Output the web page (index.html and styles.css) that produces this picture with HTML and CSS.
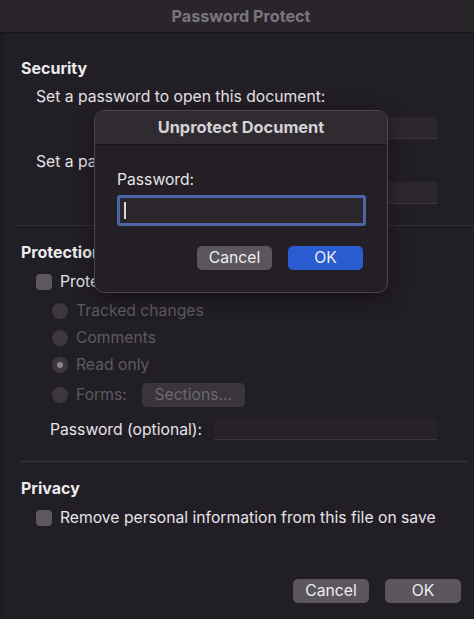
FILE: index.html
```html
<!DOCTYPE html>
<html>
<head>
<meta charset="utf-8">
<link rel="stylesheet" href="styles.css">
</head>
<body>
<div class="window">
  <div class="titlebar">Password Protect</div>
  <div class="content">
    <section class="section security">
      <h2 class="heading">Security</h2>
      <div class="label">Set a password to open this document:</div>
      <div class="field-row"><div class="field"></div></div>
      <div class="label second">Set a password to modify this document:</div>
      <div class="field-row"><div class="field"></div></div>
    </section>
    <div class="divider"></div>
    <section class="section protection">
      <h2 class="heading">Protection</h2>
      <div class="check-row"><span class="checkbox"></span><span class="check-label">Protect document for:</span></div>
      <div class="radios">
        <div class="radio-row"><span class="radio"></span><span>Tracked changes</span></div>
        <div class="radio-row"><span class="radio"></span><span>Comments</span></div>
        <div class="radio-row"><span class="radio on"></span><span>Read only</span></div>
        <div class="radio-row forms"><span class="radio"></span><span>Forms:</span><span class="sections-btn">Sections...</span></div>
      </div>
      <div class="optional-row"><span class="opt-label">Password (optional):</span><div class="field opt-field"></div></div>
    </section>
    <div class="divider wide"></div>
    <section class="section privacy">
      <h2 class="heading">Privacy</h2>
      <div class="check-row"><span class="checkbox"></span><span class="check-label">Remove personal information from this file on save</span></div>
    </section>
    <div class="footer">
      <button class="btn">Cancel</button>
      <button class="btn">OK</button>
    </div>
  </div>

  <div class="dialog">
    <div class="dialog-title">Unprotect Document</div>
    <div class="dialog-body">
      <div class="dialog-label">Password:</div>
      <div class="dialog-input"><span class="caret"></span></div>
      <div class="dialog-buttons">
        <button class="btn dbtn">Cancel</button>
        <button class="btn dbtn primary">OK</button>
      </div>
    </div>
  </div>
</div>
</body>
</html>
```
FILE: styles.css
```css
* { box-sizing: border-box; }
html, body { margin: 0; padding: 0; }
body {
  width: 474px;
  height: 619px;
  overflow: hidden;
  background: #221e24;
  font-family: "Inter", "Liberation Sans", sans-serif;
  color: #e6e4e8;
}
.window {
  position: relative;
  width: 474px;
  height: 619px;
  background: #221e25;
  border-left: 5px solid #1e1a20;
}
.titlebar {
  height: 33px;
  background: #29252b;
  border-bottom: 1px solid #17141a;
  text-align: center;
  font-weight: 700;
  font-size: 16.2px;
  line-height: 32px;
  color: #7a767d;
  margin-left: -5px;
  padding-left: 8px;
}
.content {
  padding: 26px 0 0 16px;
}
.heading {
  margin: 0;
  font-size: 16px;
  font-weight: 700;
  color: #ecebee;
  line-height: 18px;
}
.label {
  margin-left: 15px;
  margin-top: 11px;
  font-size: 15.7px;
  line-height: 18px;
  color: #e4e2e6;
}
.field-row {
  display: flex;
  justify-content: flex-end;
  padding-right: 37px;
  margin-top: 11px;
}
.field {
  width: 230px;
  height: 22px;
  background: #2b272d;
  border-bottom: 1px solid #3a363c;
}
.label.second { margin-top: 14px; }
.divider {
  height: 1px;
  background: #343036;
  margin: 21px 0 0 -6px;
}
.protection { padding-top: 17px; }
.check-row {
  display: flex;
  align-items: center;
  gap: 8px;
  margin-left: 15px;
  margin-top: 12px;
  font-size: 15.7px;
  line-height: 18px;
  color: #e6e4e8;
}
.checkbox {
  width: 16px;
  height: 16px;
  border-radius: 4px;
  background: #5c585e;
  flex: none;
}
.radios {
  margin-left: 31px;
  margin-top: 11px;
  display: flex;
  flex-direction: column;
  gap: 9px;
  color: #5e5a62;
  font-size: 15.7px;
  line-height: 18px;
}
.radio-row {
  display: flex;
  align-items: center;
  gap: 8px;
}
.radio {
  width: 16px;
  height: 16px;
  border-radius: 50%;
  background: #3c383e;
  flex: none;
  display: flex;
  align-items: center;
  justify-content: center;
}
.radio.on::after {
  content: "";
  width: 6px;
  height: 6px;
  border-radius: 50%;
  background: #8a868c;
}
.radio-row.forms { margin-top: 0; }
.sections-btn {
  margin-left: 7px;
  width: 103px;
  height: 24px;
  border-radius: 5px;
  background: #39353b;
  color: #6c686e;
  text-align: center;
  line-height: 24px;
}
.optional-row {
  display: flex;
  align-items: center;
  margin-left: 29px;
  margin-top: 12px;
  gap: 12px;
  font-size: 15.7px;
  line-height: 21px;
  color: #e6e4e8;
}
.opt-field {
  width: 223px;
  height: 21px;
  background: #262228;
}
.divider.wide { margin: 21px 6px 0 -1px; background: #38343a; }
.privacy { padding-top: 17px; }
.footer {
  display: flex;
  justify-content: flex-end;
  gap: 16px;
  padding-right: 13px;
  margin-top: 52px;
}
.btn {
  width: 76px;
  height: 24px;
  border: none;
  border-radius: 5px;
  background: #5a565c;
  color: #eeedf0;
  font-family: "Inter", "Liberation Sans", sans-serif;
  font-size: 15.7px;
  line-height: 24px;
  padding: 0;
}
.dialog {
  position: absolute;
  left: 89px;
  top: 110px;
  width: 294px;
  height: 183px;
  background: #231f25;
  border: 1px solid #4a464c;
  border-radius: 10px;
  overflow: hidden;
  box-shadow: 0 6px 20px rgba(0,0,0,0.4);
}
.dialog-title {
  height: 34px;
  background: #2f2b31;
  border-bottom: 1px solid #18151a;
  text-align: center;
  font-weight: 700;
  font-size: 16.4px;
  line-height: 33px;
  color: #d4d2d6;
}
.dialog-body {
  padding: 26px 24px 0 22px;
}
.dialog-label {
  font-size: 15.7px;
  line-height: 18px;
  color: #e6e4e8;
}
.dialog-input {
  margin-top: 6px;
  margin-right: -3px;
  height: 31px;
  border: 3px solid #4a66a6;
  border-radius: 3px;
  background: #2a262c;
  position: relative;
}
.caret {
  position: absolute;
  left: 4px;
  top: 4px;
  width: 2px;
  height: 17px;
  background: #d8d8d8;
}
.dialog-buttons {
  display: flex;
  justify-content: flex-end;
  gap: 16px;
  margin-top: 20px;
}
.dbtn { width: 75px; }
.primary { background: #2b5bd0; }
```
